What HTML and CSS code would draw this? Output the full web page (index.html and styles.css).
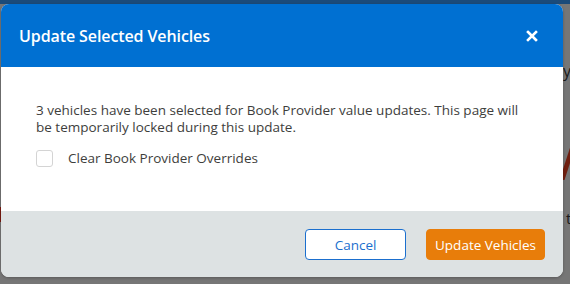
FILE: index.html
```
<!DOCTYPE html>
<html>
<head>
<meta charset="utf-8">
<link rel="stylesheet" href="styles.css">
</head>
<body>
<div class="backdrop">
  <div class="topstrip"></div>
  <span class="bg-y">y</span>
  <span class="bg-t">t</span>
  <div class="bg-red"></div>
  <div class="bg-red-left"></div>
</div>
<div class="modal">
  <div class="modal-header">
    <h2 class="modal-title">Update Selected Vehicles</h2>
    <button class="close" aria-label="Close">
      <svg width="12" height="12" viewBox="0 0 12 12"><path d="M2 2 L10 10 M10 2 L2 10" stroke="#fff" stroke-width="2.6" stroke-linecap="square"/></svg>
    </button>
  </div>
  <div class="modal-body">
    <p class="msg">3 vehicles have been selected for Book Provider value updates. This page will be temporarily locked during this update.</p>
    <label class="check-row">
      <span class="checkbox"></span>
      <span class="check-label">Clear Book Provider Overrides</span>
    </label>
  </div>
  <div class="modal-footer">
    <button class="btn btn-cancel">Cancel</button>
    <button class="btn btn-primary">Update Vehicles</button>
  </div>
</div>
</body>
</html>
```
FILE: styles.css
```
html, body {
  margin: 0;
  padding: 0;
}
body {
  width: 570px;
  height: 284px;
  overflow: hidden;
  background: #767676;
  font-family: "Open Sans", "Liberation Sans", sans-serif;
  position: relative;
}
.backdrop {
  position: absolute;
  inset: 0;
}
.topstrip {
  height: 4px;
  background: #1b4b7a;
}
.bg-y {
  position: absolute;
  left: 563px;
  top: 60px;
  font-size: 16px;
  color: #1a1a1a;
}
.bg-t {
  position: absolute;
  left: 566px;
  top: 208px;
  font-size: 15px;
  color: #1a1a1a;
}
.bg-red {
  position: absolute;
  left: 566px;
  top: 140px;
  width: 5px;
  height: 40px;
  background: #6f1f10;
  transform: skewX(-18deg);
}
.bg-red-left {
  position: absolute;
  left: 0;
  top: 207px;
  width: 1px;
  height: 15px;
  background: #7a1a10;
}
.modal {
  position: absolute;
  left: 1px;
  top: 4px;
  width: 562px;
  height: 273px;
  border-radius: 8px;
  overflow: hidden;
  background: #fff;
  display: flex;
  flex-direction: column;
  box-shadow: 0 1px 3px rgba(0,0,0,0.25);
}
.modal-header {
  height: 63px;
  background: #0070d2;
  display: flex;
  align-items: center;
  justify-content: space-between;
  padding: 0 25px 0 18px;
  flex: none;
}
.modal-title {
  margin: 0;
  color: #fff;
  font-size: 16px;
  font-weight: 600;
  letter-spacing: -0.1px;
}
.close {
  background: none;
  border: 0;
  padding: 0;
  width: 12px;
  height: 12px;
  display: flex;
}
.modal-body {
  flex: 1;
  padding: 35px 35px 0 35px;
  color: #3e3e3c;
}
.msg {
  margin: 0;
  font-size: 13.5px;
  line-height: 17px;
  color: #3e3e3c;
}
.check-row {
  display: flex;
  align-items: center;
  margin-top: 13px;
}
.checkbox {
  width: 15px;
  height: 15px;
  border: 1px solid #d4d4d4;
  border-radius: 3px;
  background: #fff;
}
.check-label {
  margin-left: 15px;
  font-size: 13.5px;
  color: #3e3e3c;
}
.modal-footer {
  height: 66px;
  background: #dde2e3;
  display: flex;
  justify-content: flex-end;
  align-items: flex-start;
  padding: 18px 18px 0 0;
  box-sizing: border-box;
  flex: none;
  gap: 20px;
}
.btn {
  height: 31px;
  border-radius: 4px;
  font-family: "Open Sans", "Liberation Sans", sans-serif;
  font-size: 13.5px;
  padding: 0;
  cursor: pointer;
}
.btn-cancel {
  width: 101px;
  background: #fff;
  border: 1px solid #1b6fce;
  color: #1b6fce;
}
.btn-primary {
  width: 119px;
  background: #e87d0a;
  border: 1px solid #e87d0a;
  color: #fff;
}
```
